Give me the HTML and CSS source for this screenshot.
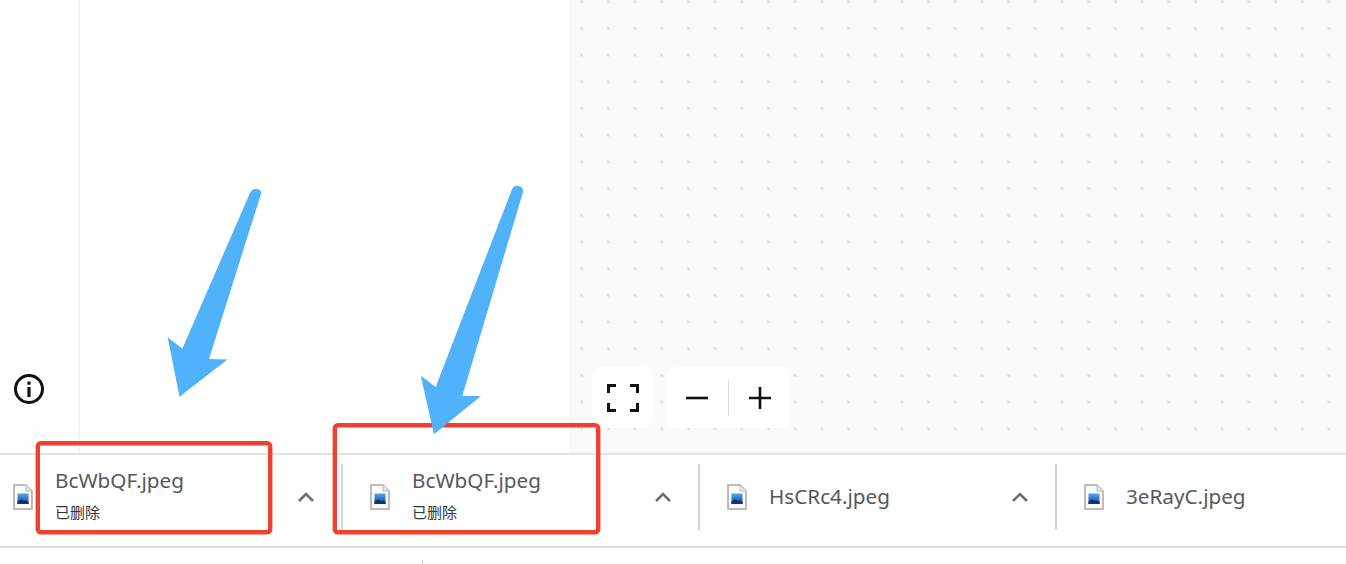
FILE: index.html
```html
<!DOCTYPE html>
<html lang="zh-CN">
<head>
  <meta charset="UTF-8" />
  <meta name="viewport" content="width=device-width, initial-scale=1.0"/>
  <title>下载栏</title>
  <link rel="stylesheet" href="styles.css">
</head>
<body>
  <svg class="defs" width="0" height="0">
    <defs>
      <linearGradient id="pic" x1="0" y1="0" x2="0" y2="1">
        <stop offset="0" stop-color="#5aa6ea"/>
        <stop offset="0.5" stop-color="#2f75cb"/>
        <stop offset="1" stop-color="#123071"/>
      </linearGradient>
      <symbol id="file-icon" viewBox="0 0 20 26">
        <path d="M1 1h12l6 6v18H1z" fill="#fafafa" stroke="#a8a8a8" stroke-width="1.5"/>
        <path d="M13 1v6h6" fill="#e8e8e8" stroke="#bbb" stroke-width="1"/>
        <rect x="4.500" y="9.500" width="11" height="10.500" fill="url(#pic)"/>
        <path d="M4.500 17.500l3.500-2 3 1.500 1.500-.5 3 1.500v2h-11z" fill="#123071"/>
      </symbol>
      <symbol id="chevron" viewBox="0 0 18 12">
        <path d="M2 10l7-7 7 7" fill="none" stroke="#6f6f6f" stroke-width="2.6"/>
      </symbol>
    </defs>
  </svg>

  <div class="page">
    <div class="workspace">
      <div class="side">
        <div class="side-rail"></div>
        <svg class="info-icon" viewBox="0 0 32 32" width="32" height="32">
          <circle cx="16" cy="16" r="13.5" fill="none" stroke="#111" stroke-width="3"/>
          <rect x="14.400" y="14" width="3.200" height="10" fill="#111"/>
          <rect x="14.400" y="8.500" width="3.200" height="3.200" fill="#111"/>
        </svg>
      </div>
      <div class="canvas">
        <div class="controls">
          <div class="control-box fit-box">
            <svg viewBox="0 0 32 28" width="32" height="28">
              <path d="M1.500 9V1.500H9M23 1.500h7.500V9M1.500 19v7.500H9M23 26.500h7.500V19" fill="none" stroke="#111" stroke-width="3"/>
            </svg>
          </div>
          <div class="control-box zoom-box">
            <svg viewBox="0 0 22 22" width="22" height="22"><path d="M0 11h22" stroke="#111" stroke-width="2.600"/></svg>
            <span class="zoom-divider"></span>
            <svg viewBox="0 0 22 22" width="22" height="22"><path d="M0 11h22M11 0v22" stroke="#111" stroke-width="2.600"/></svg>
          </div>
        </div>
      </div>
    </div>

    <div class="download-bar">
      <div class="download-item">
        <svg class="file-icon"><use href="#file-icon"/></svg>
        <div class="file-text">
          <div class="file-name">BcWbQF.jpeg</div>
          <div class="file-status">已删除</div>
        </div>
        <svg class="chevron"><use href="#chevron"/></svg>
      </div>
      <div class="download-item">
        <svg class="file-icon"><use href="#file-icon"/></svg>
        <div class="file-text">
          <div class="file-name">BcWbQF.jpeg</div>
          <div class="file-status">已删除</div>
        </div>
        <svg class="chevron"><use href="#chevron"/></svg>
      </div>
      <div class="download-item">
        <svg class="file-icon"><use href="#file-icon"/></svg>
        <div class="file-text">
          <div class="file-name">HsCRc4.jpeg</div>
        </div>
        <svg class="chevron"><use href="#chevron"/></svg>
      </div>
      <div class="download-item last">
        <svg class="file-icon"><use href="#file-icon"/></svg>
        <div class="file-text">
          <div class="file-name">3eRayC.jpeg</div>
        </div>
      </div>
    </div>

    <div class="bottom-strip"><span class="tick"></span></div>

    <svg class="annotations" viewBox="0 0 1346 564" width="1346" height="564">
      <rect class="mark-box" x="37.800" y="443.200" width="232.400" height="89" rx="3"/>
      <rect class="mark-box" x="334.800" y="425.200" width="263.400" height="107" rx="3"/>
      <path class="mark-arrow" d="M250 193Q253 188 257 189Q262 190 261 194L209 359L227.500 359.500L179.500 396.800L167.700 337.300L182.300 348.700Z"/>
      <path class="mark-arrow" d="M511.700 190Q514 185 518 186Q524 187 523 192L462.300 396L481 396L434 434.300L420.700 375.700L435.700 387Z"/>
    </svg>
  </div>
</body>
</html>
```

FILE: styles.css
```css
* {
  box-sizing: border-box;
}

body {
  margin: 0;
  background-color: #ffffff;
  font-family: 'Noto Sans', 'Noto Sans CJK SC', sans-serif;
}

.defs {
  position: absolute;
}

.page {
  position: relative;
  width: 1346px;
  height: 564px;
  overflow: hidden;
}

.workspace {
  display: flex;
  height: 453px;
}

.side {
  position: relative;
  width: 569px;
}

.side-rail {
  width: 80px;
  height: 100%;
  border-right: 1px solid #f1f1f1;
}

.info-icon {
  position: absolute;
  left: 13px;
  top: 373px;
}

.canvas {
  position: relative;
  flex: 1;
  background-color: #fafafa;
  background-image: radial-gradient(circle, #e2e2e2 1.2px, transparent 1.9px);
  background-size: 26.7px 26.7px;
  background-position: -0.65px -11.65px;
}

.controls {
  position: absolute;
  left: 23px;
  top: 367px;
  display: flex;
  gap: 13px;
}

.control-box {
  display: flex;
  align-items: center;
  height: 61px;
  background-color: #ffffff;
  border-radius: 11px;
}

.fit-box {
  justify-content: center;
  width: 61px;
}

.zoom-box {
  justify-content: space-between;
  width: 125px;
  padding: 0 20px;
}

.zoom-divider {
  width: 1px;
  height: 36px;
  background-color: #dcdcdc;
}

.download-bar {
  display: flex;
  align-items: flex-start;
  height: 95px;
  margin-left: -14px;
  padding-top: 9px;
  background-color: #ffffff;
  border-top: 2px solid #e3e3e3;
  border-bottom: 2px solid #dcdcdc;
}

.download-item {
  display: flex;
  align-items: center;
  flex: none;
  width: 357px;
  height: 66px;
  padding: 0 26px 0 27px;
  border-right: 2px solid #d4d4d4;
}

.download-item.last {
  border-right: none;
}

.file-icon {
  flex: none;
  width: 20px;
  height: 26px;
}

.file-text {
  flex: 1;
  margin: 0 0 2px 22px;
}

.file-name {
  font-size: 20.7px;
  line-height: 26px;
  color: #56585c;
}

.file-status {
  margin: 9px 0 4px;
  font-size: 15px;
  line-height: 20px;
  color: #333333;
}

.chevron {
  flex: none;
  width: 18px;
  height: 12px;
}

.bottom-strip {
  height: 16px;
  padding: 12px 0 0 422px;
}

.tick {
  display: block;
  width: 1px;
  height: 4px;
  background-color: #cccccc;
}

.annotations {
  position: absolute;
  left: 0;
  top: 0;
  pointer-events: none;
}

.mark-box {
  fill: none;
  stroke: #ef4130;
  stroke-width: 4.400;
}

.mark-arrow {
  fill: #50b2fb;
}
```
